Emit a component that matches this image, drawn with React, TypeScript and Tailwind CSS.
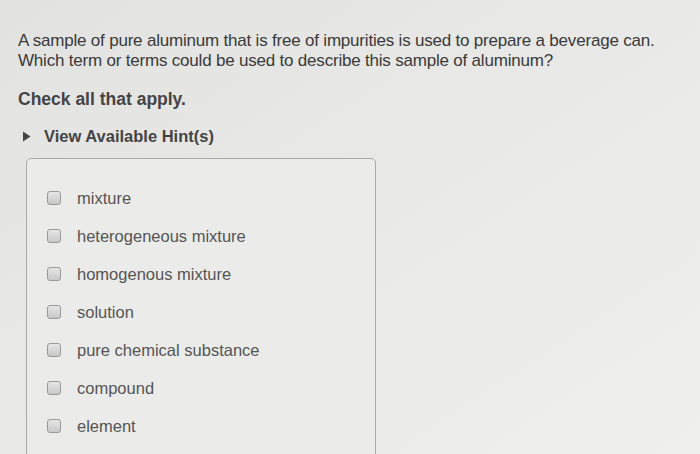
import React from 'react';

const options = [
    'mixture',
    'heterogeneous mixture',
    'homogenous mixture',
    'solution',
    'pure chemical substance',
    'compound',
    'element',
];

export default function App() {
    return (
        <div
            className="w-[700px] h-[454px] overflow-hidden bg-gradient-to-br from-[#e2e2e0] via-[#e9e9e7] to-[#efefed] text-[#3a3a3a]"
            style={{ fontFamily: '"Liberation Sans", Arial, sans-serif' }}
        >
            <div className="pl-[18px] pt-[31px]">
                <p className="text-[17px] leading-[20px] tracking-[-0.2px]">
                    A sample of pure aluminum that is free of impurities is used to prepare a beverage can.
                    <br />
                    Which term or terms could be used to describe this sample of aluminum?
                </p>
                <p className="mt-[15px] text-[17.5px] font-bold text-[#444]">Check all that apply.</p>
                <div className="mt-[12px] flex items-center gap-[13px] pl-[4px]">
                    <svg width="9" height="11" viewBox="0 0 9 11">
                        <path d="M1 0.5 L8.5 5.5 L1 10.5 Z" fill="#444" />
                    </svg>
                    <span className="text-[16.5px] font-bold text-[#444]">View Available Hint(s)</span>
                </div>
            </div>
            <div className="ml-[26px] mt-[9px] w-[350px] h-[320px] rounded-[5px] border border-[#a9a9a9] bg-[#ebebe9]">
                <ul className="flex flex-col gap-[16px] pl-[20px] pt-[28px]">
                    {options.map((opt) => (
                        <li key={opt} className="flex items-center gap-[16px] h-[22px]">
                            <span className="w-[14px] h-[14px] rounded-[3px] border border-[#9a9a9a] bg-gradient-to-b from-[#e6e6e6] to-[#c8c8c8]" />
                            <span className="text-[16.5px] text-[#555]">{opt}</span>
                        </li>
                    ))}
                </ul>
            </div>
        </div>
    );
}
